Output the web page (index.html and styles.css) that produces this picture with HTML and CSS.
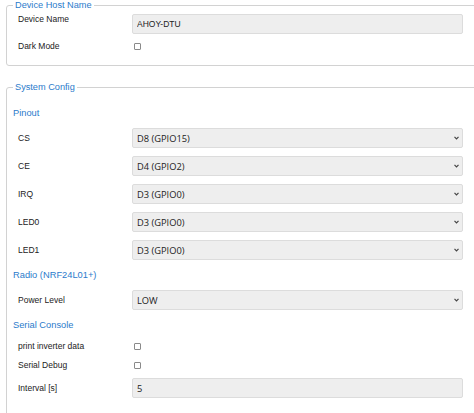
FILE: index.html
```html
<!DOCTYPE html>
<html lang="en">
<head>
    <meta charset="UTF-8">
    <meta name="viewport" content="width=device-width, initial-scale=1.0">
    <title>Settings</title>
    <link rel="stylesheet" href="styles.css">
</head>
<body>

<div class="page">
    <fieldset class="box box-host">
        <legend>Device Host Name</legend>
        <div class="row row-top">
            <label for="device">Device Name</label>
            <input type="text" id="device" value="AHOY-DTU" />
        </div>
        <div class="row row-check">
            <label for="dark">Dark Mode</label>
            <input type="checkbox" id="dark" />
        </div>
    </fieldset>

    <fieldset class="box box-system">
        <legend>System Config</legend>

        <p class="subhead">Pinout</p>
        <div class="row">
            <label>CS</label>
            <div class="select">
                <select><option>D8 (GPIO15)</option></select>
                <svg class="chevron" width="5" height="4" viewBox="0 0 5 4"><path d="M0.5 0.8 L2.5 2.8 L4.5 0.8" fill="none" stroke="#444" stroke-width="1.2"/></svg>
            </div>
        </div>
        <div class="row">
            <label>CE</label>
            <div class="select">
                <select><option>D4 (GPIO2)</option></select>
                <svg class="chevron" width="5" height="4" viewBox="0 0 5 4"><path d="M0.5 0.8 L2.5 2.8 L4.5 0.8" fill="none" stroke="#444" stroke-width="1.2"/></svg>
            </div>
        </div>
        <div class="row">
            <label>IRQ</label>
            <div class="select">
                <select><option>D3 (GPIO0)</option></select>
                <svg class="chevron" width="5" height="4" viewBox="0 0 5 4"><path d="M0.5 0.8 L2.5 2.8 L4.5 0.8" fill="none" stroke="#444" stroke-width="1.2"/></svg>
            </div>
        </div>
        <div class="row">
            <label>LED0</label>
            <div class="select">
                <select><option>D3 (GPIO0)</option></select>
                <svg class="chevron" width="5" height="4" viewBox="0 0 5 4"><path d="M0.5 0.8 L2.5 2.8 L4.5 0.8" fill="none" stroke="#444" stroke-width="1.2"/></svg>
            </div>
        </div>
        <div class="row">
            <label>LED1</label>
            <div class="select">
                <select><option>D3 (GPIO0)</option></select>
                <svg class="chevron" width="5" height="4" viewBox="0 0 5 4"><path d="M0.5 0.8 L2.5 2.8 L4.5 0.8" fill="none" stroke="#444" stroke-width="1.2"/></svg>
            </div>
        </div>

        <p class="subhead">Radio (NRF24L01+)</p>
        <div class="row">
            <label>Power Level</label>
            <div class="select">
                <select><option>LOW</option></select>
                <svg class="chevron" width="5" height="4" viewBox="0 0 5 4"><path d="M0.5 0.8 L2.5 2.8 L4.5 0.8" fill="none" stroke="#444" stroke-width="1.2"/></svg>
            </div>
        </div>

        <p class="subhead">Serial Console</p>
        <div class="row row-check">
            <label for="serEn">print inverter data</label>
            <input type="checkbox" id="serEn" />
        </div>
        <div class="row row-check">
            <label for="serDbg">Serial Debug</label>
            <input type="checkbox" id="serDbg" />
        </div>
        <div class="row">
            <label for="serIntvl">Interval [s]</label>
            <input type="text" id="serIntvl" class="num" value="5" />
        </div>
    </fieldset>
</div>

</body>
</html>
```

FILE: styles.css
```css
html, body {
    margin: 0;
    overflow: hidden;
    background-color: #fff;
}
body {
    font-family: "Liberation Sans", Arial, sans-serif;
    font-size: 8.5px;
    color: #222;
}
.page {
    padding-left: 6px;
}
.box {
    box-sizing: border-box;
    width: 500px;
    margin: 0;
    border: 1px solid #d2d2d2;
    border-radius: 3px;
    padding: 4px 0 13px 6px;
}
.box legend {
    font-size: 9.2px;
    line-height: 10px;
    color: #2b7bcb;
    padding: 0 2px;
}
.box .row:last-child {
    margin-bottom: 0;
}
.box-system {
    margin-top: 16px;
    padding-top: 6px;
    padding-bottom: 24px;
}
.subhead {
    font-size: 9.3px;
    line-height: 12px;
    color: #2b7bcb;
    margin: 9px 0 9px;
}
.row {
    display: grid;
    grid-template-columns: 119px 331px;
    align-items: center;
    height: 20px;
    margin-bottom: 8px;
}
.row label {
    padding-left: 5px;
    line-height: 10px;
}
.row-top {
    margin-bottom: 6px;
}
.row-top label {
    align-self: start;
}
.row-check {
    height: 12px;
    margin-bottom: 7px;
}
.row input[type="text"],
.row select {
    box-sizing: border-box;
    width: 100%;
    height: 20px;
    margin: 0;
    padding: 0 4px;
    background-color: #eee;
    border: 1px solid #dcdcdc;
    border-radius: 2px;
    color: #222;
    outline: none;
}
.row input[type="text"] {
    font-family: "Liberation Sans", Arial, sans-serif;
    font-size: 8.5px;
}
.row input.num {
    font-family: "Open Sans", sans-serif;
    font-size: 9.3px;
}
.row select {
    appearance: none;
    -webkit-appearance: none;
    font-family: "Open Sans", sans-serif;
    font-size: 9.3px;
}
.row input[type="checkbox"] {
    appearance: none;
    -webkit-appearance: none;
    width: 7px;
    height: 7px;
    margin: 0 0 0 2px;
    border: 1px solid #8a8a8a;
    border-radius: 1px;
    background-color: #fff;
}
.select {
    position: relative;
    height: 20px;
}
.select .chevron {
    position: absolute;
    right: 4px;
    top: 8px;
    pointer-events: none;
}
```
